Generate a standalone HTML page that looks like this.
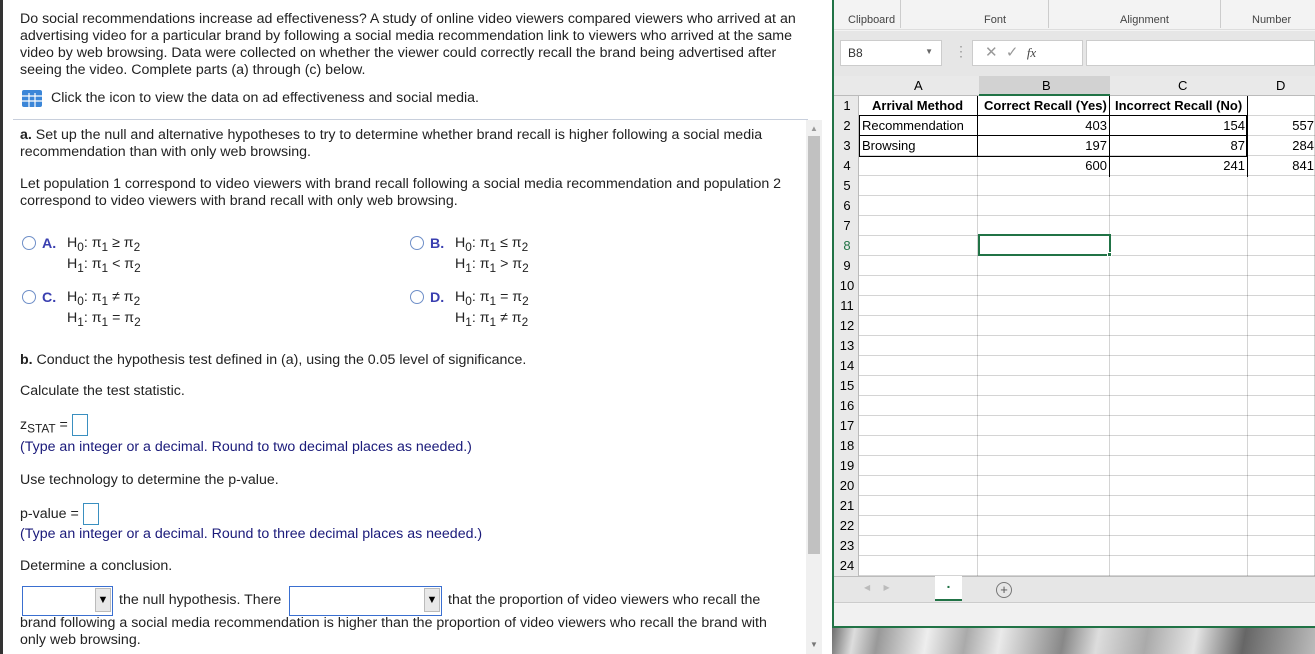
<!DOCTYPE html>
<html><head><meta charset="utf-8"><style>
*{margin:0;padding:0;box-sizing:border-box}
body{width:1315px;height:654px;overflow:hidden;background:#fff;font-family:"Liberation Sans",Arial,sans-serif;font-size:14.2px;color:#222;position:relative}
.a{position:absolute;white-space:nowrap}
.p{line-height:17px}
.blue{color:#1a1a7a}
.opt{color:#3a3fb0;font-weight:bold}
.rad{position:absolute;width:14px;height:14px;border:1.5px solid #6f8fc8;border-radius:50%;background:#fff}
.box{display:inline-block;width:16px;height:20px;border:1px solid #3a8fc0;vertical-align:middle}
.dd{position:absolute;height:30px;border:1px solid #3a6fd0;background:#fff}
.dd i{position:absolute;right:1px;top:1px;width:16px;height:24px;background:#e8e8e8;border:1px solid #bbb;font-style:normal;font-size:11px;text-align:center;line-height:22px;color:#000}
.xl{position:absolute;left:832px;top:0;width:483px;height:628px;background:#f3f3f3;border-left:2px solid #217346;border-bottom:2px solid #217346}
.cell{position:absolute;font-family:"Liberation Sans",sans-serif;font-size:13px;color:#000;line-height:20px}
</style></head><body>
<div class="a" style="left:0;top:0;width:3px;height:654px;background:#333"></div>
<div class="a p" style="left:20px;top:11px">Do social recommendations increase ad effectiveness? A study of online video viewers compared viewers who arrived at an<br>advertising video for a particular brand by following a social media recommendation link to viewers who arrived at the same<br>video by web browsing. Data were collected on whether the viewer could correctly recall the brand being advertised after<br>seeing the video. Complete parts (a) through (c) below.</div>
<div class="a" style="left:22px;top:90px;width:20px;height:17px;background:#3b86d8;border-radius:2px"><svg width="20" height="17"><g stroke="#fff" stroke-width="1.2"><line x1="0" y1="6" x2="20" y2="6"/><line x1="0" y1="11" x2="20" y2="11"/><line x1="7" y1="3" x2="7" y2="17"/><line x1="13" y1="3" x2="13" y2="17"/></g></svg></div>
<div class="a" style="left:51px;top:90px">Click the icon to view the data on ad effectiveness and social media.</div>
<div class="a" style="left:13px;top:119px;width:795px;height:1px;background:#c8cfdc"></div>
<div class="a p" style="left:20px;top:127px"><b>a.</b> Set up the null and alternative hypotheses to try to determine whether brand recall is higher following a social media<br>recommendation than with only web browsing.</div>
<div class="a p" style="left:20px;top:176px">Let population 1 correspond to video viewers with brand recall following a social media recommendation and population 2<br>correspond to video viewers with brand recall with only web browsing.</div>
<div class="rad" style="left:22px;top:236px"></div><div class="a opt" style="left:42px;top:236px">A.</div>
<div class="a p" style="left:67px;top:235px">H<sub>0</sub>: π<sub>1</sub> ≥ π<sub>2</sub><br>H<sub>1</sub>: π<sub>1</sub> &lt; π<sub>2</sub></div>
<div class="rad" style="left:410px;top:236px"></div><div class="a opt" style="left:430px;top:236px">B.</div>
<div class="a p" style="left:455px;top:235px">H<sub>0</sub>: π<sub>1</sub> ≤ π<sub>2</sub><br>H<sub>1</sub>: π<sub>1</sub> &gt; π<sub>2</sub></div>
<div class="rad" style="left:22px;top:290px"></div><div class="a opt" style="left:42px;top:290px">C.</div>
<div class="a p" style="left:67px;top:289px">H<sub>0</sub>: π<sub>1</sub> ≠ π<sub>2</sub><br>H<sub>1</sub>: π<sub>1</sub> = π<sub>2</sub></div>
<div class="rad" style="left:410px;top:290px"></div><div class="a opt" style="left:430px;top:290px">D.</div>
<div class="a p" style="left:455px;top:289px">H<sub>0</sub>: π<sub>1</sub> = π<sub>2</sub><br>H<sub>1</sub>: π<sub>1</sub> ≠ π<sub>2</sub></div>
<div class="a" style="left:20px;top:352px"><b>b.</b> Conduct the hypothesis test defined in (a), using the 0.05 level of significance.</div>
<div class="a" style="left:20px;top:383px">Calculate the test statistic.</div>
<div class="a" style="left:20px;top:414px">z<sub>STAT</sub> = <span class="box" style="height:22px"></span></div>
<div class="a blue" style="left:20px;top:439px">(Type an integer or a decimal. Round to two decimal places as needed.)</div>
<div class="a" style="left:20px;top:472px">Use technology to determine the p-value.</div>
<div class="a" style="left:20px;top:503px">p-value = <span class="box" style="height:22px"></span></div>
<div class="a blue" style="left:20px;top:526px">(Type an integer or a decimal. Round to three decimal places as needed.)</div>
<div class="a" style="left:20px;top:558px">Determine a conclusion.</div>
<div class="dd" style="left:22px;top:586px;width:91px"><i>▼</i></div>
<div class="a" style="left:119px;top:592px">the null hypothesis. There</div>
<div class="dd" style="left:289px;top:586px;width:153px"><i>▼</i></div>
<div class="a" style="left:448px;top:592px">that the proportion of video viewers who recall the</div>
<div class="a p" style="left:20px;top:615px">brand following a social media recommendation is higher than the proportion of video viewers who recall the brand with<br>only web browsing.</div>
<div class="a" style="left:806px;top:120px;width:16px;height:534px;background:#f0f0f0"></div>
<div class="a" style="left:808px;top:136px;width:12px;height:418px;background:#c1c1c1"></div>
<div class="a" style="left:810px;top:124px;font-size:8px;color:#999">▲</div>
<div class="a" style="left:810px;top:640px;font-size:8px;color:#777">▼</div>

<div class="a" style="left:832px;top:620px;width:483px;height:34px;background:linear-gradient(100deg,#666 0,#ddd 5%,#999 10%,#eee 20%,#aaa 28%,#eaeaea 35%,#888 48%,#ddd 55%,#aaa 65%,#e5e5e5 75%,#666 85%,#bbb 100%)"></div>
<div class="xl">
 <div class="a" style="left:0;top:0;width:481px;height:30px;background:#f3f3f3;border-bottom:1px solid #ddd"></div>
 <div class="a" style="left:14px;top:14px;font-size:11px;color:#444">Clipboard</div>
 <div class="a" style="left:150px;top:14px;font-size:11px;color:#444">Font</div>
 <div class="a" style="left:286px;top:14px;font-size:11px;color:#444">Alignment</div>
 <div class="a" style="left:418px;top:14px;font-size:11px;color:#444">Number</div>
 <div class="a" style="left:66px;top:0;width:1px;height:28px;background:#ccc"></div>
 <div class="a" style="left:214px;top:0;width:1px;height:28px;background:#ccc"></div>
 <div class="a" style="left:386px;top:0;width:1px;height:28px;background:#ccc"></div>
 <div class="a" style="left:0;top:31px;width:481px;height:45px;background:#e6e6e6"></div>
 <div class="a" style="left:6px;top:40px;width:102px;height:26px;background:#fff;border:1px solid #ccc;font-size:12px;padding:5px 7px;color:#333">B8<span style="position:absolute;right:8px;top:6px;font-size:8px;color:#666">▼</span></div>
 <div class="a" style="left:120px;top:44px;color:#999">⋮</div>
 <div class="a" style="left:138px;top:40px;width:111px;height:26px;background:#fff;border:1px solid #ccc;color:#999;font-size:15px;padding:2px 12px">✕ &nbsp;✓ &nbsp;<i style="font-family:'Liberation Serif';font-size:13px;color:#444">fx</i></div>
 <div class="a" style="left:252px;top:40px;width:229px;height:26px;background:#fff;border:1px solid #ccc"></div>
 <div class="a" style="left:0;top:76px;width:481px;height:20px;background:#e9e9e9;border-bottom:1px solid #bbb"></div>
 <div class="a" style="left:145px;top:76px;width:131px;height:20px;background:#d2d2d2;border-bottom:2px solid #217346"></div>
 <div class="a" style="left:0;top:96px;width:25px;height:480px;background:#e9e9e9;border-right:1px solid #bbb"></div>
 <div class="a" style="left:25px;top:96px;width:456px;height:480px;background:#fff;
  background-image:linear-gradient(#d4d4d4,#d4d4d4),linear-gradient(#d4d4d4,#d4d4d4),linear-gradient(#d4d4d4,#d4d4d4),linear-gradient(#d4d4d4,#d4d4d4);
  background-size:1px 100%,1px 100%,1px 100%,1px 100%;background-position:118px 0,250px 0,388px 0,455px 0;background-repeat:no-repeat"></div>
 <div class="a" style="left:25px;top:96px;width:456px;height:480px;background:repeating-linear-gradient(#fff 0,#fff 19px,#d4d4d4 19px,#d4d4d4 20px);mix-blend-mode:multiply"></div>
 <div class="cell" style="left:80px;top:76px">A</div>
 <div class="cell" style="left:208px;top:76px">B</div>
 <div class="cell" style="left:344px;top:76px">C</div>
 <div class="cell" style="left:442px;top:76px">D</div>
 <div class="cell" style="left:5px;top:96px;width:16px;text-align:center;line-height:20px">1<br>2<br>3<br>4<br>5<br>6<br>7<br><span style="color:#217346">8</span><br>9<br>10<br>11<br>12<br>13<br>14<br>15<br>16<br>17<br>18<br>19<br>20<br>21<br>22<br>23<br>24</div>
 <div class="a" style="left:25px;top:115px;width:388px;height:42px;border:1px solid #000"></div>
 <div class="a" style="left:143px;top:96px;width:1px;height:61px;background:#000"></div>
 <div class="a" style="left:275px;top:96px;width:1px;height:81px;background:#000"></div>
 <div class="a" style="left:413px;top:96px;width:1px;height:81px;background:#000"></div>
 <div class="a" style="left:25px;top:135px;width:388px;height:1px;background:#000"></div>
 <div class="cell" style="left:38px;top:96px;font-weight:bold">Arrival Method</div>
 <div class="cell" style="left:150px;top:96px;font-weight:bold">Correct Recall (Yes)</div>
 <div class="cell" style="left:281px;top:96px;font-weight:bold">Incorrect Recall (No)</div>
 <div class="cell" style="left:28px;top:116px">Recommendation<br>Browsing</div>
 <div class="cell" style="left:200px;top:116px;width:73px;text-align:right">403<br>197<br>600</div>
 <div class="cell" style="left:330px;top:116px;width:81px;text-align:right">154<br>87<br>241</div>
 <div class="cell" style="left:420px;top:116px;width:60px;text-align:right">557<br>284<br>841</div>
 <div class="a" style="left:144px;top:234px;width:133px;height:22px;border:2px solid #217346"></div>
 <div class="a" style="left:273px;top:252px;width:5px;height:5px;background:#217346;border:1px solid #fff"></div>
 <div class="a" style="left:0;top:576px;width:481px;height:27px;background:#e6e6e6;border-top:1px solid #bbb;border-bottom:1px solid #ccc"></div>
 <div class="a" style="left:30px;top:583px;font-size:8px;color:#bbb">◀ &nbsp;&nbsp;&nbsp;&nbsp; ▶</div>
 <div class="a" style="left:101px;top:576px;width:27px;height:25px;background:#fff;border-bottom:2px solid #217346;text-align:center;color:#217346;font-weight:bold">.</div>
 <div class="a" style="left:162px;top:582px;width:16px;height:16px;border:1px solid #777;border-radius:50%;text-align:center;line-height:13px;font-size:13px;color:#555">+</div>
 <div class="a" style="left:0;top:604px;width:481px;height:22px;background:#f1f1f1"></div>
</div>
</body></html>
